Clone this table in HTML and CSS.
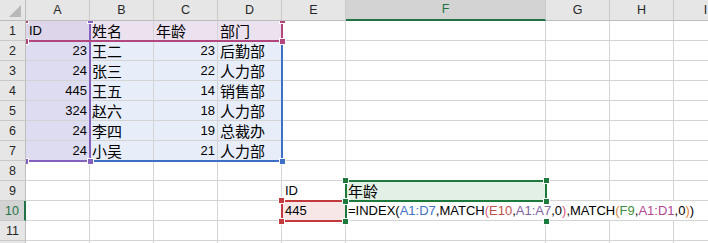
FILE: index.html
```html
<!DOCTYPE html>
<html lang="zh">
<head>
<meta charset="utf-8">
<title>Sheet</title>
<link rel="stylesheet" href="styles.css">
</head>
<body>
<div class="sheet">
  <div class="grid">
    <div class="corner"><span class="tri"></span></div>
    <div class="ch">A</div><div class="ch">B</div><div class="ch">C</div><div class="ch">D</div><div class="ch">E</div><div class="ch ch-sel">F</div><div class="ch">G</div><div class="ch">H</div><div class="ch">I</div>

    <div class="rh">1</div>
    <div class="c f-a1">ID</div><div class="c f-top"><span class="zh">姓名</span></div><div class="c f-top"><span class="zh">年龄</span></div><div class="c f-top"><span class="zh">部门</span></div><div class="c"></div><div class="c"></div><div class="c"></div><div class="c"></div><div class="c"></div>

    <div class="rh">2</div>
    <div class="c f-acol num">23</div><div class="c f-blue"><span class="zh">王二</span></div><div class="c f-blue num">23</div><div class="c f-blue"><span class="zh">后勤部</span></div><div class="c"></div><div class="c"></div><div class="c"></div><div class="c"></div><div class="c"></div>

    <div class="rh">3</div>
    <div class="c f-acol num">24</div><div class="c f-blue"><span class="zh">张三</span></div><div class="c f-blue num">22</div><div class="c f-blue"><span class="zh">人力部</span></div><div class="c"></div><div class="c"></div><div class="c"></div><div class="c"></div><div class="c"></div>

    <div class="rh">4</div>
    <div class="c f-acol num">445</div><div class="c f-blue"><span class="zh">王五</span></div><div class="c f-blue num">14</div><div class="c f-blue"><span class="zh">销售部</span></div><div class="c"></div><div class="c"></div><div class="c"></div><div class="c"></div><div class="c"></div>

    <div class="rh">5</div>
    <div class="c f-acol num">324</div><div class="c f-blue"><span class="zh">赵六</span></div><div class="c f-blue num">18</div><div class="c f-blue"><span class="zh">人力部</span></div><div class="c"></div><div class="c"></div><div class="c"></div><div class="c"></div><div class="c"></div>

    <div class="rh">6</div>
    <div class="c f-acol num">24</div><div class="c f-blue"><span class="zh">李四</span></div><div class="c f-blue num">19</div><div class="c f-blue"><span class="zh">总裁办</span></div><div class="c"></div><div class="c"></div><div class="c"></div><div class="c"></div><div class="c"></div>

    <div class="rh">7</div>
    <div class="c f-acol num">24</div><div class="c f-blue"><span class="zh">小吴</span></div><div class="c f-blue num">21</div><div class="c f-blue"><span class="zh">人力部</span></div><div class="c"></div><div class="c"></div><div class="c"></div><div class="c"></div><div class="c"></div>

    <div class="rh">8</div>
    <div class="c"></div><div class="c"></div><div class="c"></div><div class="c"></div><div class="c"></div><div class="c"></div><div class="c"></div><div class="c"></div><div class="c"></div>

    <div class="rh">9</div>
    <div class="c"></div><div class="c"></div><div class="c"></div><div class="c"></div><div class="c">ID</div><div class="c f-green"><span class="zh">年龄</span></div><div class="c"></div><div class="c"></div><div class="c"></div>

    <div class="rh rh-sel">10</div>
    <div class="c"></div><div class="c"></div><div class="c"></div><div class="c"></div><div class="c f-red">445</div><div class="c formula">=INDEX(<span class="r-blue">A1:D7</span>,MATCH<span class="p1">(</span><span class="r-red">E10</span>,<span class="r-purple">A1:A7</span>,0<span class="p1">)</span>,MATCH<span class="p2">(</span><span class="r-green">F9</span>,<span class="r-mag">A1:D1</span>,0<span class="p2">)</span>)</div>

    <div class="rh">11</div>
    <div class="c"></div><div class="c"></div><div class="c"></div><div class="c"></div><div class="c"></div><div class="c"></div><div class="c"></div><div class="c"></div><div class="c"></div>

    <div class="rh"></div>
    <div class="c"></div><div class="c"></div><div class="c"></div><div class="c"></div><div class="c"></div><div class="c"></div><div class="c"></div><div class="c"></div><div class="c"></div>
  </div>

  <div class="ranges">
    <div class="rng rng-blue rng-a1d7 edge"><i class="k tl"></i><i class="k tr"></i><i class="k bl"></i><i class="k br"></i></div>
    <div class="rng rng-purple rng-a1a7 edge"><i class="k tl"></i><i class="k tr"></i><i class="k bl"></i><i class="k br"></i></div>
    <div class="rng rng-mag rng-a1d1 edge"><i class="k tl"></i><i class="k tr"></i><i class="k bl"></i><i class="k br"></i></div>
    <div class="rng rng-red rng-e10"><i class="k tl"></i><i class="k tr"></i><i class="k bl"></i><i class="k br"></i></div>
    <div class="rng rng-active rng-f10"><i class="k bl"></i><i class="k br"></i></div>
    <div class="rng rng-green rng-f9"><i class="k tl"></i><i class="k tr"></i><i class="k bl"></i><i class="k br"></i></div>
  </div>
</div>
</body>
</html>
```

FILE: styles.css
```css
html, body {
  margin: 0;
  padding: 0;
  background: #fff;
  overflow: hidden;
}

.sheet {
  position: relative;
  width: 708px;
  height: 243px;
  overflow: hidden;
  font-family: "Liberation Sans", "Noto Sans CJK SC", sans-serif;
}

.grid {
  display: grid;
  grid-template-columns: 26px 64px 64px 64px 64px 64px 200px 64px 64px 64px;
  grid-template-rows: 21px repeat(12, 20px);
  width: 760px;
}

.corner {
  position: relative;
  background: #e6e6e6;
  border-right: 1px solid #bdbdbd;
  border-bottom: 1px solid #bdbdbd;
  box-sizing: border-box;
}

.tri {
  position: absolute;
  right: 4px;
  bottom: 3px;
  width: 0;
  height: 0;
  border-left: 12px solid transparent;
  border-bottom: 12px solid #b8b8b8;
}

.ch {
  box-sizing: border-box;
  background: #e6e6e6;
  border-right: 1px solid #c9c9c9;
  border-bottom: 1px solid #bdbdbd;
  text-align: center;
  font-size: 12.5px;
  line-height: 20px;
  color: #262626;
}

.ch-sel {
  background: #d3d3d3;
  color: #217346;
  border-bottom: 2px solid #217346;
  line-height: 19px;
}

.rh {
  box-sizing: border-box;
  background: #e6e6e6;
  border-right: 1px solid #bdbdbd;
  border-bottom: 1px solid #c9c9c9;
  text-align: center;
  font-size: 12.5px;
  line-height: 20px;
  color: #262626;
}

.rh-sel {
  background: #d3d3d3;
  color: #217346;
  border-right: 2px solid #217346;
}

.c {
  box-sizing: border-box;
  border-right: 1px solid #d4d4d4;
  border-bottom: 1px solid #d4d4d4;
  font-size: 13px;
  line-height: 19px;
  padding: 0 2px 0 3px;
  white-space: nowrap;
  color: #000;
  overflow: visible;
}

.zh {
  font-family: "Noto Sans CJK SC", sans-serif;
  font-size: 15px;
  line-height: 19px;
  margin-left: -1px;
}

.num {
  text-align: right;
}

.formula {
  grid-column: span 4;
  border-right: none;
  padding-left: 2px;
}

.f-a1 { background: #ddd5ea; }
.f-top { background: #ebe1ef; }
.f-acol { background: #dedcf0; }
.f-blue { background: #e8eef9; }
.f-red { background: #f8e7e7; }
.f-green { background: #e3f0e5; }

.r-blue { color: #4472c4; }
.r-red { color: #c0504d; }
.r-purple { color: #8064a2; }
.r-green { color: #3f8f3f; }
.r-mag { color: #b2488f; }
.p1 { color: #d65b7c; }
.p2 { color: #d8853a; }

/* range highlight overlays */
.ranges {
  position: absolute;
  left: 26px;
  top: 21px;
  right: 0;
  bottom: 0;
  overflow: hidden;
}

.rng {
  position: absolute;
  box-sizing: border-box;
  border: 2px solid;
}

.rng.edge {
  border-top-color: transparent;
  border-left-color: transparent;
}

.rng-blue { border-color: #3d6fc4; color: #3d6fc4; }
.rng-purple { border-color: #8660bd; color: #8660bd; }
.rng-mag { border-color: #b2467f; color: #b2467f; }
.rng-red { border-color: #c33a3e; color: #c33a3e; }
.rng-green { border-color: #1e7a3c; color: #1e7a3c; }
.rng-active {
  border-color: transparent;
  border-left-color: #1e7a3c;
  color: #1e7a3c;
}

/* coordinates relative to cell area origin (26, 21) */
.rng-a1d7 { left: -1px; top: -1px; width: 258px; height: 142px; }
.rng-a1a7 { left: -1px; top: -1px; width: 66px; height: 142px; }
.rng-a1d1 { left: -1px; top: -1px; width: 258px; height: 22px; }
.rng-e10 { left: 255px; top: 179px; width: 66px; height: 22px; }
.rng-f9 { left: 319px; top: 159px; width: 202px; height: 22px; }
.rng-f10 { left: 319px; top: 179px; width: 202px; height: 22px; }

.k {
  position: absolute;
  width: 5px;
  height: 5px;
  background: currentColor;
  box-shadow: 0 0 0 1px #fff;
}

.k.tl { left: -4px; top: -4px; }
.k.tr { right: -4px; top: -4px; }
.k.bl { left: -4px; bottom: -4px; }
.k.br { right: -4px; bottom: -4px; }
```
